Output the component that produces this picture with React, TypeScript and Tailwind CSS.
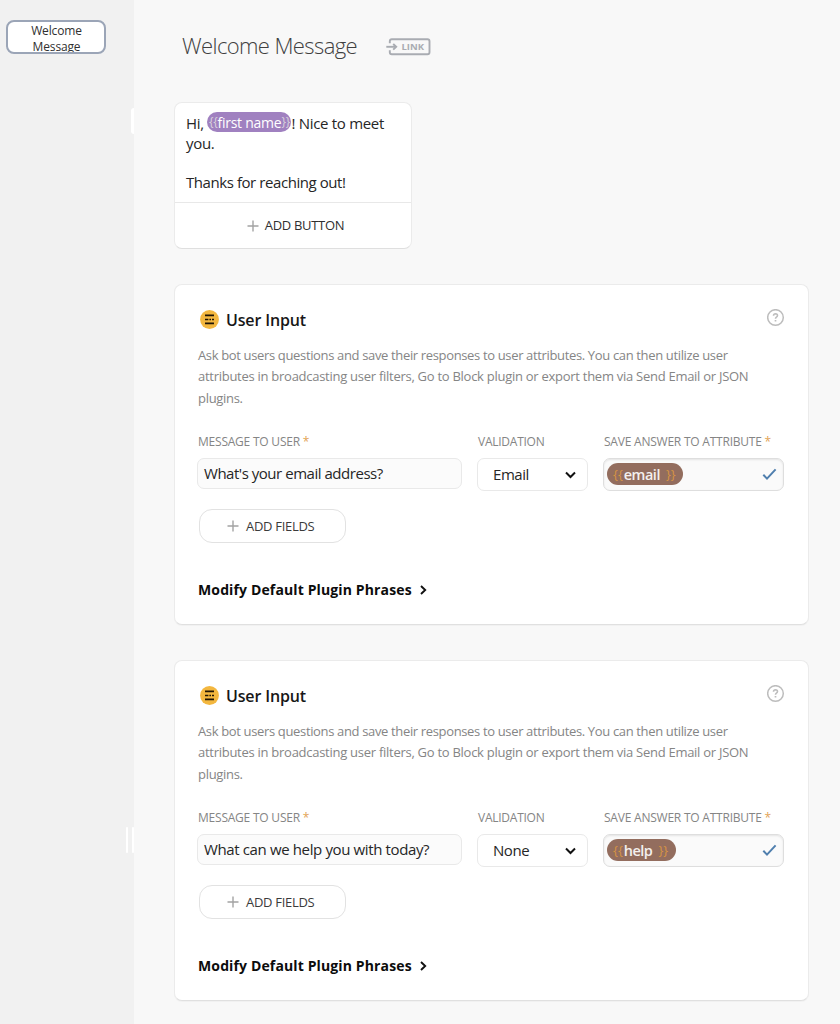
import React from "react";

function Plus({ className }: { className?: string }) {
  return (
    <svg className={className} width="12" height="12" viewBox="0 0 12 12" fill="none" stroke="#a3a3a3" strokeWidth="1.4">
      <path d="M6 0.5V11.5M0.5 6H11.5" />
    </svg>
  );
}

function LinkBadge() {
  return (
    <div className="relative ml-[30px] mt-[2px] h-[18px] w-[45px]">
      <svg width="45" height="18" viewBox="0 0 45 18" fill="none" stroke="#a9acb2" strokeWidth="1.9">
        <path d="M3.8 5.2V3.2Q3.8 1.2 5.8 1.2H41.5Q43.5 1.2 43.5 3.2V14.3Q43.5 16.3 41.5 16.3H5.8Q3.8 16.3 3.8 14.3V12.3" />
        <path d="M0.3 8.8H10" />
        <path d="M7.2 6L10.2 8.8L7.2 11.6" />
      </svg>
      <span className="absolute left-[15.5px] top-[3px] text-[9.5px] leading-[12px] font-bold text-[#a9acb2]">LINK</span>
    </div>
  );
}

function UserInputIcon() {
  return (
    <svg className="-mt-[2px]" width="19" height="19" viewBox="0 0 19 19">
      <circle cx="9.5" cy="9.5" r="9.4" fill="#f3b73f" />
      <g stroke="#201504">
        <path d="M5 5.4H14M5 13.4H14" strokeWidth="1.8" />
        <path d="M5 9.5H8.4M9.4 9.5H11M12 9.5H14" strokeWidth="1.6" />
      </g>
    </svg>
  );
}

function HelpIcon() {
  return (
    <svg width="18" height="18" viewBox="0 0 18 18" fill="none" stroke="#bdbdbd">
      <circle cx="8.5" cy="8.5" r="7.8" strokeWidth="1.5" />
      <path d="M6.5 6.7Q6.6 4.8 8.5 4.8Q10.5 4.9 10.5 6.5Q10.5 7.5 9.4 8.2Q8.5 8.8 8.5 9.8" strokeWidth="1.6" />
      <path d="M8.5 11V12.5" strokeWidth="1.7" />
    </svg>
  );
}

type CardProps = { question: string; questionTracking: string; validation: string; attribute: string; pill: string };

function UserInputCard({ question, questionTracking, validation, attribute, pill }: CardProps) {
  return (
    <section className="h-[341px] w-[635px] rounded-[8px] border border-[#ebebeb] border-b-[#e0e0e0] bg-white pl-[22px] pr-[23px] pt-[24px] shadow-[0_1px_1px_rgba(0,0,0,0.03)]">
      <header className="flex items-start justify-between">
        <div className="flex h-[21px] items-center gap-[7px] pl-[3px] pt-[1px]">
          <UserInputIcon />
          <h2 className="whitespace-nowrap pt-[1px] text-[16px] leading-[19px] font-semibold tracking-[-0.15px] text-[#171717]">User Input</h2>
        </div>
        <HelpIcon />
      </header>
      <p className="mt-[15px] h-[64px] pl-[1px] text-[13px] leading-[21.3px] whitespace-nowrap text-[#858585]">
        <span className="tracking-[-0.35px]">Ask bot users questions and save their responses to user attributes. You can then utilize user</span>
        <br />
        <span className="tracking-[-0.27px]">attributes in broadcasting user filters, Go to Block plugin or export them via Send Email or JSON</span>
        <br />
        <span className="tracking-[-0.3px]">plugins.</span>
      </p>
      <div className="mt-[25px] flex text-[12px] leading-[16px] whitespace-nowrap text-[#858585]">
        <div className="w-[280px] pl-[1px] tracking-[-0.22px]">MESSAGE TO USER <span className="text-[#e2a356]">*</span></div>
        <div className="w-[126px] pl-[1px] tracking-[-0.25px]">VALIDATION</div>
        <div className="pl-[1px] tracking-[-0.22px]">SAVE ANSWER TO ATTRIBUTE <span className="text-[#e2a356]">*</span></div>
      </div>
      <div className="mt-[8px] flex h-[34px] items-start whitespace-nowrap text-[15px] text-[#262626]">
        <div className={"h-[31px] w-[265px] rounded-[7px] border border-[#e9e9e9] bg-[#fbfbfb] pl-[6px] leading-[29px] " + questionTracking}>{question}</div>
        <div className="ml-[15px] flex h-[33px] w-[111px] items-center justify-between rounded-[7px] border border-[#e9e9e9] bg-white pl-[15px] pr-[11px] tracking-[-0.45px]">
          {validation}
          <svg width="11" height="8" viewBox="0 0 11 8" fill="none" stroke="#111" strokeWidth="2">
            <path d="M1 1.5L5.5 6L10 1.5" />
          </svg>
        </div>
        <div className="ml-[15px] flex h-[33px] w-[181px] items-center justify-between rounded-[7px] border border-[#dedede] bg-[#fafafa] pl-[3px] pr-[6px] shadow-[inset_0_1px_2px_rgba(0,0,0,0.09)]">
          <div className={"-mt-[1px] flex h-[22px] items-center rounded-full bg-[#936d5e] pl-[6px] leading-[20px] " + pill}>
            <span className="text-[13px] text-[#d59344]">{"{{"}</span>
            <span className="ml-[1px] pt-[1px] text-[14.5px] font-semibold tracking-[-0.5px] text-[#f4f0ee]">{attribute}</span>
            <span className="ml-[6px] text-[13px] text-[#d59344]">{"}}"}</span>
          </div>
          <svg width="15" height="13" viewBox="0 0 15 13" fill="none" stroke="#4f7fae" strokeWidth="2">
            <path d="M1.3 6.7L5 10.6L13.6 1.4" />
          </svg>
        </div>
      </div>
      <div className="ml-[2px] mt-[17px] flex h-[34px] w-[147px] items-center rounded-[13px] border border-[#e2e2e2] bg-white pl-[27px] text-[13px] whitespace-nowrap text-[#3b3b3b]">
        <Plus />
        <span className="ml-[7px] pt-[1px] tracking-[-0.3px]">ADD FIELDS</span>
      </div>
      <div className="ml-[1px] mt-[37px] flex items-center whitespace-nowrap text-[14px] leading-[20px] font-bold text-[#0c0c0c]">
        <span className="tracking-[0.13px]">Modify Default Plugin Phrases</span>
        <svg className="ml-[8px]" width="7" height="10" viewBox="0 0 7 10" fill="none" stroke="#111" strokeWidth="1.9">
          <path d="M1 1L5.2 5L1 9" />
        </svg>
      </div>
    </section>
  );
}

export default function App() {
  return (
    <div className="flex h-[1024px] w-[840px] overflow-hidden bg-[#f8f8f8] font-['Open_Sans','Noto_Sans',sans-serif]">
      <aside className="flex w-[134px] shrink-0 flex-col bg-[#f1f1f1] pt-[20px]">
        <div className="ml-[6px] h-[34px] w-[100px] overflow-hidden rounded-[8px] border-2 border-[#9ba5b7] bg-white pl-[1px] pt-[1px] text-center text-[12px] leading-[16px] tracking-[-0.15px] text-[#303030]">
          Welcome
          <br />
          Message
        </div>
        <div className="ml-auto mt-[54px] h-[26px] w-[3px] rounded-l-full bg-white" />
        <div className="ml-auto mt-[693px] flex gap-[4px]">
          <div className="h-[26px] w-[2px] rounded-full bg-white" />
          <div className="h-[26px] w-[2px] rounded-full bg-white" />
        </div>
      </aside>
      <main className="flex flex-col pl-[40px]">
        <div className="mt-[30px] flex h-[32px] items-center pl-[8px]">
          <h1 className="-mt-[2px] w-[174px] whitespace-nowrap text-[22px] leading-[32px] font-light tracking-[-0.6px] text-[#404040]">Welcome Message</h1>
          <LinkBadge />
        </div>
        <section className="mt-[40px] flex h-[147px] w-[238px] flex-col rounded-[8px] border border-[#ebebeb] border-b-[#dfdfdf] bg-white">
          <div className="h-[100px] border-b border-[#e8e8e8] pl-[11px] pt-[11px] text-[15px] leading-[19.6px] whitespace-nowrap tracking-[-0.3px] text-[#262626]">
            Hi, <span className="-mt-[2px] inline-flex h-[20px] w-[84px] items-center justify-center rounded-full bg-[#a081c0] align-top text-[14px] leading-[20px] tracking-[-0.25px] text-[#d9d3dc]"><span className="text-[12px]">{"{{"}</span><span className="pt-[2px] text-white">first name</span><span className="text-[12px]">{"}}"}</span></span>! Nice to meet
            <br />
            you.
            <br />
            <br />
            <span className="tracking-[-0.43px]">Thanks for reaching out!</span>
          </div>
          <div className="flex flex-1 items-center justify-center gap-[6px] pl-[5px] text-[13px] whitespace-nowrap text-[#303030]">
            <Plus />
            <span className="tracking-[-0.3px]">ADD BUTTON</span>
          </div>
        </section>
        <div className="mt-[35px] flex flex-col gap-[35px]">
          <UserInputCard question="What's your email address?" questionTracking="tracking-[-0.47px]" validation="Email" attribute="email" pill="w-[76px]" />
          <UserInputCard question="What can we help you with today?" questionTracking="tracking-[-0.37px]" validation="None" attribute="help" pill="w-[69px]" />
        </div>
      </main>
    </div>
  );
}
